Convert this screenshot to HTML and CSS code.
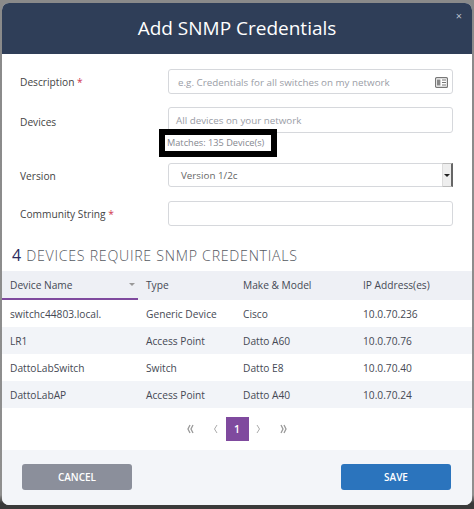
FILE: index.html
```html
<!DOCTYPE html>
<html lang="en">
<head>
<meta charset="utf-8">
<title>Add SNMP Credentials</title>
<link rel="stylesheet" href="styles.css">
</head>
<body>
<div class="modal">
  <header class="head">
    <h1>Add SNMP Credentials</h1>
    <span class="close">×</span>
  </header>
  <form class="form">
    <div class="row r1">
      <label>Description <b>*</b></label>
      <div class="input ph first">e.g. Credentials for all switches on my network
        <svg class="card" width="13" height="11" viewBox="0 0 13 11"><rect x="0.6" y="0.6" width="11.8" height="9.8" rx="1" fill="#fff" stroke="#777" stroke-width="1.2"/><rect x="2" y="2.5" width="3.4" height="6" fill="#888"/><path d="M7 3h4M7 5.5h4M7 8h4" stroke="#777" stroke-width="1.2"/></svg>
      </div>
    </div>
    <div class="row r2">
      <label>Devices</label>
      <div class="input ph">All devices on your network</div>
      <div class="matches">Matches: 135 Device(s)</div>
    </div>
    <div class="row r3">
      <label>Version</label>
      <div class="input select">Version 1/2c
        <span class="spin"><i></i></span>
      </div>
    </div>
    <div class="row r4">
      <label>Community String <b>*</b></label>
      <div class="input"></div>
    </div>
  </form>
  <h2><em>4</em> DEVICES REQUIRE SNMP CREDENTIALS</h2>
  <table>
    <colgroup><col class="c1"><col class="c2"><col class="c3"><col class="c4"></colgroup>
    <thead>
      <tr><th class="sorted">Device Name<i class="caret"></i></th><th>Type</th><th>Make &amp; Model</th><th>IP Address(es)</th></tr>
    </thead>
    <tbody>
      <tr><td>switchc44803.local.</td><td>Generic Device</td><td>Cisco</td><td>10.0.70.236</td></tr>
      <tr><td>LR1</td><td>Access Point</td><td>Datto A60</td><td>10.0.70.76</td></tr>
      <tr><td>DattoLabSwitch</td><td>Switch</td><td>Datto E8</td><td>10.0.70.40</td></tr>
      <tr><td>DattoLabAP</td><td>Access Point</td><td>Datto A40</td><td>10.0.70.24</td></tr>
    </tbody>
  </table>
  <nav class="pager">
    <span class="pg dbl"><svg width="7" height="10" viewBox="0 0 7 10"><path d="M3 1L1 5 3 9M6 1L4 5 6 9" fill="none" stroke="#999" stroke-width="1.3"/></svg></span>
    <span class="pg"><svg width="5" height="10" viewBox="0 0 5 10"><path d="M4 1L1.5 5 4 9" fill="none" stroke="#aaa"/></svg></span>
    <span class="cur">1</span>
    <span class="pg"><svg width="5" height="10" viewBox="0 0 5 10"><path d="M1 1L3.5 5 1 9" fill="none" stroke="#aaa"/></svg></span>
    <span class="pg dbl"><svg width="7" height="10" viewBox="0 0 7 10"><path d="M1 1L3 5 1 9M4 1L6 5 4 9" fill="none" stroke="#999" stroke-width="1.3"/></svg></span>
  </nav>
  <footer class="foot">
    <button class="btn cancel" type="button">CANCEL</button>
    <button class="btn save" type="button">SAVE</button>
  </footer>
</div>
</body>
</html>
```
FILE: styles.css
```css
* { box-sizing: border-box; }
html, body { height: 100%; }
body {
  margin: 0;
  padding: 3px 2px 4px;
  overflow: hidden;
  background: linear-gradient(#8a8a8a 0, #8f8f8f 495px, #3a3a3a 503px);
  font-family: "Open Sans", "Liberation Sans", sans-serif;
  color: #4a4f5a;
}
.modal {
  height: 502px;
  background: #fff;
  border-radius: 7px;
  overflow: hidden;
  display: flex;
  flex-direction: column;
}
.head {
  position: relative;
  height: 51px;
  flex: none;
  padding-bottom: 2px;
  background: #2f3e58;
  display: flex;
  align-items: center;
  justify-content: center;
}
.head h1 {
  margin: 0;
  font-size: 19px;
  font-weight: 400;
  color: #fff;
}
.close {
  position: absolute;
  top: 5px;
  right: 10px;
  color: #b9c0cc;
  font-size: 11px;
}
.form { display: flex; flex-direction: column; padding: 15px 19px 0 18px; }
.row { position: relative; display: flex; align-items: center; }
.row label { width: 148px; flex: none; padding-top: 1px; font-size: 10.2px; color: #444; }
.row label b { color: #d0354f; font-weight: 400; }
.r2 label { padding-top: 3px; }
.r4 label { padding-top: 0; }
.r2 { margin-top: 13px; }
.r3 { margin-top: 30px; }
.r4 { margin-top: 14px; }
.input {
  position: relative;
  flex: 1;
  height: 25px;
  display: flex;
  align-items: center;
  padding-left: 9px;
  background: #fff;
  border: 1px solid #d6d8dc;
  border-radius: 3px;
  font-size: 9.8px;
}
.ph { color: #9a9da6; }
.r2 .input { height: 26px; padding-left: 7px; }
.first { justify-content: space-between; padding-right: 4px; padding-top: 1px; }
.card { flex: none; }
.select { padding-left: 12px; padding-top: 1px; color: #666; height: 24px; }
.spin {
  position: absolute;
  top: -1px;
  right: -1px;
  bottom: -1px;
  width: 11px;
  display: flex;
  align-items: center;
  justify-content: center;
  background: #eee;
  border: 1px solid #bbb;
  border-left-color: #ddd;
  border-right: 2px solid #666;
}
.spin i {
  width: 0;
  height: 0;
  border: 3px solid transparent;
  border-top: 3px solid #222;
  border-bottom: 0;
}
.matches {
  position: absolute;
  left: 139px;
  top: 22px;
  width: 118px;
  height: 28px;
  border: 6px solid #000;
  background: #fff;
  padding-left: 2px;
  font-size: 9.2px;
  line-height: 16px;
  color: #85888f;
  white-space: nowrap;
}
h2 {
  margin: 18px 0 0;
  padding-left: 10px;
  height: 27px;
  font-size: 14.2px;
  line-height: 22px;
  font-weight: 300;
  letter-spacing: 0.72px;
  color: #55595f;
}
h2 em { font-style: normal; font-size: 16px; font-weight: 400; color: #2c2a5c; }
table { width: 100%; border-collapse: collapse; table-layout: fixed; font-size: 10.2px; color: #454954; }
.c1 { width: 136px; }
.c2 { width: 97px; }
.c3 { width: 120px; }
th, td { padding: 0 0 0 8px; text-align: left; font-weight: 400; white-space: nowrap; }
th { height: 29px; padding-bottom: 2px; background: #eef0f5; position: relative; }
th.sorted::after {
  content: "";
  position: absolute;
  left: 0;
  bottom: 0;
  width: 138px;
  height: 2px;
  background: #7f4a9e;
}
.caret {
  position: absolute;
  left: 127px;
  top: 12px;
  border: 3px solid transparent;
  border-top: 3px solid #999;
  border-bottom: 0;
}
td { height: 27px; }
tbody tr:nth-child(even) td { background: #f2f4f8; }
.pager {
  display: flex;
  justify-content: center;
  align-items: center;
  height: 42px;
  flex: none;
}
.pg { width: 20px; height: 11px; display: flex; justify-content: center; align-items: center; }
.pg.dbl { width: 30px; }
.cur {
  width: 23px;
  height: 24px;
  display: flex;
  align-items: center;
  justify-content: center;
  background: #7f4a9e;
  color: #fff;
  font-size: 10.5px;
  font-weight: 600;
}
.foot {
  flex: 1;
  background: #f3f5f9;
  display: flex;
  justify-content: space-between;
  padding: 14px 21px 0 20px;
  align-items: flex-start;
}
.btn {
  width: 110px;
  height: 26px;
  border: 0;
  border-radius: 3px;
  color: #fff;
  font-family: inherit;
  font-size: 10px;
  font-weight: 600;
}
.cancel { background: #8b8f9b; }
.save { background: #2b74bd; }
```
